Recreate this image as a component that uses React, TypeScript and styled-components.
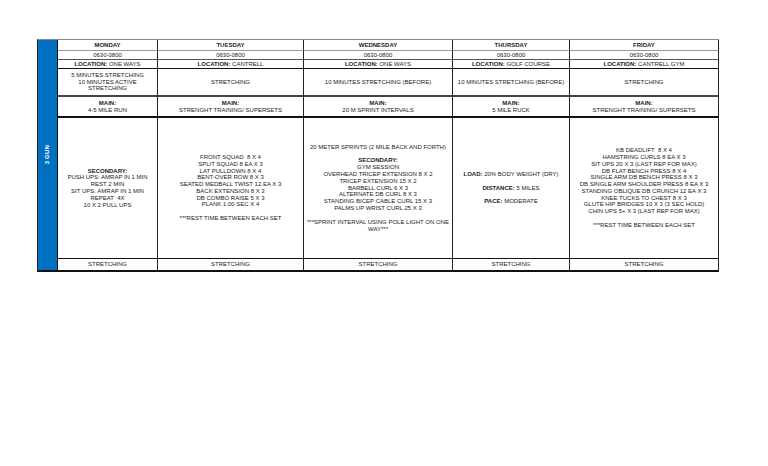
import React from 'react';
import styled, { createGlobalStyle } from 'styled-components';

type Day = {
  name: string;
  time: string;
  location: string;
  warmup: string[];
  main: string;
  secondary: { bold?: string; lines: string[] }[];
};

const days: Day[] = [
  {
    name: 'MONDAY',
    time: '0630-0800',
    location: 'ONE WAYS',
    warmup: ['5 MINUTES STRETCHING', '10 MINUTES ACTIVE', 'STRETCHING'],
    main: '4-5 MILE RUN',
    secondary: [
      {
        bold: 'SECONDARY:',
        lines: [
          'PUSH UPS: AMRAP IN 1 MIN',
          'REST 2 MIN',
          'SIT UPS: AMRAP IN 1 MIN',
          'REPEAT  4X',
          '10 X 2 PULL UPS',
        ],
      },
    ],
  },
  {
    name: 'TUESDAY',
    time: '0630-0800',
    location: 'CANTRELL',
    warmup: ['STRETCHING'],
    main: 'STRENGHT TRAINING/ SUPERSETS',
    secondary: [
      {
        lines: [
          'FRONT SQUAD  8 X 4',
          'SPLIT SQUAD 8 EA X 3',
          'LAT PULLDOWN 8 X 4',
          'BENT-OVER ROW 8 X 3',
          'SEATED MEDBALL TWIST 12 EA X 3',
          'BACK EXTENSION 8 X 3',
          'DB COMBO RAISE 5 X 3',
          'PLANK 1:00 SEC X 4',
        ],
      },
      { lines: ['***REST TIME BETWEEN EACH SET'] },
    ],
  },
  {
    name: 'WEDNESDAY',
    time: '0630-0800',
    location: 'ONE WAYS',
    warmup: ['10 MINUTES STRETCHING (BEFORE)'],
    main: '20 M SPRINT INTERVALS',
    secondary: [
      { lines: ['20 METER SPRINTS (2 MILE BACK AND FORTH)'] },
      {
        bold: 'SECONDARY:',
        lines: [
          'GYM SESSION',
          'OVERHEAD TRICEP EXTENSION 8 X 2',
          'TRICEP EXTENSION 15 X 2',
          'BARBELL CURL 6 X 3',
          'ALTERNATE DB CURL 8 X 3',
          'STANDING BICEP CABLE CURL 15 X 3',
          'PALMS UP WRIST CURL 25 X 3',
        ],
      },
      { lines: ['***SPRINT INTERVAL USING POLE LIGHT ON ONE WAY***'] },
    ],
  },
  {
    name: 'THURSDAY',
    time: '0630-0800',
    location: 'GOLF COURSE',
    warmup: ['10 MINUTES STRETCHING (BEFORE)'],
    main: '5 MILE RUCK',
    secondary: [
      { bold: 'LOAD:', lines: ['20% BODY WEIGHT (DRY)'] },
      { bold: 'DISTANCE:', lines: ['5 MILES'] },
      { bold: 'PACE:', lines: ['MODERATE'] },
    ],
  },
  {
    name: 'FRIDAY',
    time: '0630-0800',
    location: 'CANTRELL GYM',
    warmup: ['STRETCHING'],
    main: 'STRENGHT TRAINING/ SUPERSETS',
    secondary: [
      {
        lines: [
          'KB DEADLIFT  8 X 4',
          'HAMSTRING CURLS 8 EA X 3',
          'SIT UPS 20 X 3 (LAST REP FOR MAX)',
          'DB FLAT BENCH PRESS 8 X 4',
          'SINGLE ARM DB BENCH PRESS 8 X 3',
          'DB SINGLE ARM SHOULDER PRESS 8 EA X 3',
          'STANDING OBLIQUE DB CRUNCH 12 EA X 3',
          'KNEE TUCKS TO CHEST 8 X 3',
          'GLUTE HIP BRIDGES 10 X 3 (3 SEC HOLD)',
          'CHIN UPS 5+ X 3 (LAST REP FOR MAX)',
        ],
      },
      { lines: ['***REST TIME BETWEEN EACH SET'] },
    ],
  },
];

const Global = createGlobalStyle`
  html, body {
    margin: 0;
    padding: 0;
    background: #fff;
  }
  * { box-sizing: border-box; }
`;

const Page = styled.div`
  width: 768px;
  height: 466px;
  padding: 39px 0 0 37px;
  font-family: 'Liberation Sans', Arial, sans-serif;
  font-size: 6px;
  line-height: 6.8px;
  color: #222;
`;

const Sheet = styled.div`
  display: grid;
  grid-template-columns: 20px 100px 146px 149px 117px 149px;
  grid-template-rows: 11px 9px 9px 28px 21px 141px 11px;
  width: max-content;
  border-top: 1px solid #888;
  border-left: 1px solid #222;
  border-bottom: 2px solid #111;
`;

const Band = styled.div`
  grid-row: 1 / -1;
  grid-column: 1;
  background: #0070c0;
  border-right: 1px solid #111;
  display: flex;
  align-items: center;
  justify-content: center;
`;

const BandLabel = styled.span`
  writing-mode: vertical-rl;
  transform: rotate(180deg);
  color: #fff;
  font-weight: bold;
  font-size: 6px;
  letter-spacing: 0.2px;
`;

const Cell = styled.div<{ $line: string; $weight?: number }>`
  display: flex;
  flex-direction: column;
  align-items: center;
  justify-content: center;
  text-align: center;
  border-right: 1px solid #222;
  border-bottom: ${(p) => p.$weight ?? 1}px solid ${(p) => p.$line};
  padding: 0 2px;
  white-space: pre;
`;

const Block = styled.div`
  white-space: pre-wrap;
  & + & {
    margin-top: 7px;
  }
`;

const Line = styled.div``;

const App = () => {
  return (
    <Page>
      <Global />
      <Sheet>
        <Band>
          <BandLabel>3 GUN</BandLabel>
        </Band>
        {days.map((d) => (
          <Cell key={d.name + 'h'} $line="#999">
            <b>{d.name}</b>
          </Cell>
        ))}
        {days.map((d) => (
          <Cell key={d.name + 't'} $line="#555">
            {d.time}
          </Cell>
        ))}
        {days.map((d) => (
          <Cell key={d.name + 'l'} $line="#111">
            <span>
              <b>LOCATION:</b> {d.location}
            </span>
          </Cell>
        ))}
        {days.map((d) => (
          <Cell key={d.name + 'w'} $line="#444" $weight={2}>
            {d.warmup.map((w) => (
              <Line key={w}>{w}</Line>
            ))}
          </Cell>
        ))}
        {days.map((d) => (
          <Cell key={d.name + 'm'} $line="#111" $weight={2}>
            <Line>
              <b>MAIN:</b>
            </Line>
            <Line>{d.main}</Line>
          </Cell>
        ))}
        {days.map((d) => (
          <Cell key={d.name + 's'} $line="#111">
            {d.secondary.map((s, i) => (
              <Block key={i}>
                {s.bold && s.lines.length === 1 && d.name === 'THURSDAY' ? (
                  <Line>
                    <b>{s.bold}</b> {s.lines[0]}
                  </Line>
                ) : (
                  <>
                    {s.bold && (
                      <Line>
                        <b>{s.bold}</b>
                      </Line>
                    )}
                    {s.lines.map((l) => (
                      <Line key={l}>{l}</Line>
                    ))}
                  </>
                )}
              </Block>
            ))}
          </Cell>
        ))}
        {days.map((d) => (
          <Cell key={d.name + 'e'} $line="transparent" $weight={0}>
            STRETCHING
          </Cell>
        ))}
      </Sheet>
    </Page>
  );
};

export default App;
